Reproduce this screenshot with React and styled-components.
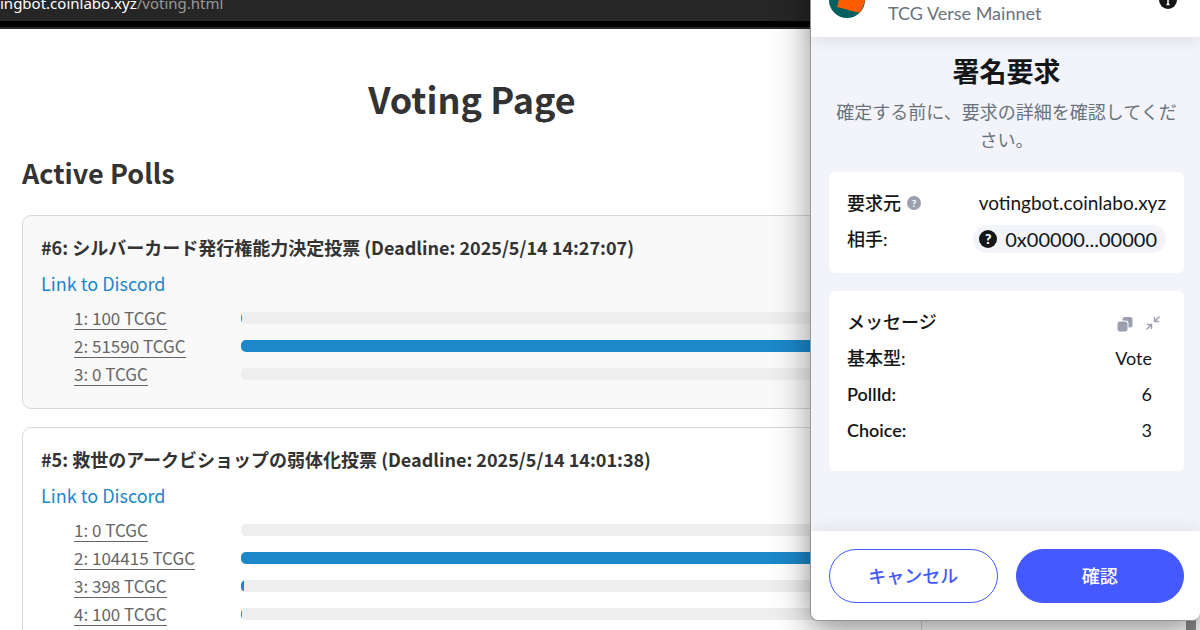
import React from 'react';
import styled, { createGlobalStyle } from 'styled-components';

const GlobalStyle = createGlobalStyle`
  * {
    box-sizing: border-box;
  }

  body {
    margin: 0;
    background: #fff;
    color: #333;
    font-family: 'Noto Sans CJK JP', sans-serif;
    font-size: 18px;
    line-height: 28px;
  }

  h1, h2, h3, p, ul, dl, dd {
    margin: 0;
    padding: 0;
  }

  button {
    font: inherit;
    padding: 0;
    border: none;
    background: none;
    cursor: pointer;
  }
`;

const Screen = styled.div`
  position: relative;
  display: flex;
  flex-direction: column;
  height: 100vh;
  overflow: hidden;
`;

const AddressBar = styled.header`
  flex: none;
  display: flex;
  align-items: flex-end;
  height: 29px;
  padding-bottom: 12px;
  overflow: hidden;
  background: linear-gradient(#262626 21px, #000 21px, #000 27px, #262626 27px);
  color: #fff;
  font-family: 'Noto Sans', sans-serif;
  font-size: 15px;
  white-space: nowrap;
`;

const Path = styled.span`
  color: #999;
`;

const Viewport = styled.div`
  flex: 1;
  display: flex;
  min-height: 0;
  overflow: hidden;
`;

const Main = styled.main`
  flex: 1;
  min-width: 0;
  padding: 40px 22px 0;
`;

const Container = styled.div`
  max-width: 900px;
`;

const PageTitle = styled.h1`
  color: #333;
  font-size: 36px;
  font-weight: 700;
  line-height: 58px;
  text-align: center;
`;

const SectionTitle = styled.h2`
  margin: 26px 0 22px;
  font-size: 27px;
  font-weight: 700;
  line-height: 40px;
`;

const PollCard = styled.section`
  margin-bottom: 18px;
  padding: 17px 18px 20px;
  border: 1px solid #d8d8d8;
  border-radius: 9px;
  background: ${({ $active }) => ($active ? '#f9f9f9' : '#fff')};
`;

const PollTitle = styled.h3`
  margin-bottom: 8px;
  font-size: 18px;
  font-weight: 700;
`;

const DiscordLink = styled.a`
  display: block;
  width: fit-content;
  margin-bottom: 7px;
  color: #1c87c9;
  text-decoration: none;
`;

const OptionList = styled.ul`
  list-style: none;
  padding: 0 18px 0 33px;
`;

const Option = styled.li`
  display: grid;
  grid-template-columns: 167px 1fr;
  align-items: center;
  height: 28px;
`;

const OptionButton = styled.button`
  justify-self: start;
  height: 24px;
  border-bottom: 1px solid #666;
  color: #666;
  font-size: 17px;
  line-height: 24px;
`;

const Track = styled.div`
  height: 12px;
  overflow: hidden;
  border-radius: 5px;
  background: #eee;
`;

const Fill = styled.div`
  height: 100%;
  background: #1c87c9;
`;

const Scrollbar = styled.div`
  flex: none;
  width: 14px;
  padding-right: 4px;
  background: #fcfcfc;
`;

const Thumb = styled.div`
  height: 100%;
  background: #8b8b8b;
`;

const Wallet = styled.aside`
  position: absolute;
  top: -35px;
  right: 0;
  width: 390px;
  border: 1px solid #999;
  border-right: none;
  border-radius: 8px;
  background: #f2f4f9;
  box-shadow: 0 10px 36px rgba(0, 0, 0, 0.42);
  color: #141618;
  font-family: Lato, 'Noto Sans CJK JP', sans-serif;
`;

const WalletHeader = styled.div`
  display: flex;
  align-items: center;
  height: 71px;
  padding: 0 23px 3px 18px;
  background: #fff;
  box-shadow: 0 2px 16px rgba(0, 0, 0, 0.1);
`;

const Network = styled.span`
  flex: 1;
  align-self: flex-end;
  padding: 0 0 7px 23px;
  color: #6a737d;
`;

const WalletBody = styled.div`
  padding: 18px 16px 42px 18px;
`;

const RequestTitle = styled.h2`
  margin-bottom: 9px;
  font-size: 27px;
  font-weight: 700;
  line-height: 34px;
  text-align: center;
`;

const RequestNote = styled.p`
  margin-bottom: 18px;
  color: #6a737d;
  text-align: center;
`;

const Panel = styled.dl`
  margin-bottom: 18px;
  padding: 13px 18px ${({ $bottom }) => $bottom}px;
  border-radius: 6px;
  background: #fff;
`;

const Row = styled.div`
  display: flex;
  align-items: center;
  justify-content: space-between;
  height: 36px;
  padding-right: ${({ $inset }) => ($inset ? 14 : 0)}px;
`;

const Label = styled.dt`
  display: flex;
  align-items: center;
  gap: 6px;
  font-weight: ${({ $latin }) => ($latin ? 600 : 500)};
`;

const Value = styled.dd`
  color: #141618;
  font-size: ${({ $large }) => ($large ? 19 : 18)}px;
`;

const HelpDot = styled.span`
  display: inline-flex;
  align-items: center;
  justify-content: center;
  width: ${({ $size }) => $size}px;
  height: ${({ $size }) => $size}px;
  border-radius: 50%;
  background: ${({ $color }) => $color};
  color: #fff;
  font-size: ${({ $size }) => $size - 4}px;
  font-weight: 900;
  line-height: 1;
`;

const AddressPill = styled.button`
  display: flex;
  align-items: center;
  gap: 8px;
  height: 28px;
  padding: 0 9px 0 6px;
  border-radius: 14px;
  background: #f2f4f9;
  color: #141618;
  font-size: 20px;
`;

const Tools = styled.dd`
  display: flex;
  gap: 12px;
  margin-right: -9px;
  padding-top: 4px;
`;

const ToolButton = styled.button`
  display: flex;
  color: #9b9fae;
`;

const WalletFooter = styled.div`
  display: grid;
  grid-template-columns: 1fr 1fr;
  gap: 18px;
  padding: 18px 16px 17px 18px;
  border-radius: 0 0 8px 8px;
  background: #fff;
  box-shadow: 0 -2px 16px rgba(0, 0, 0, 0.08);
`;

const ActionButton = styled.button`
  height: 54px;
  border: 1px solid #4459ff;
  border-radius: 27px;
  background: ${({ $primary }) => ($primary ? '#4459ff' : '#fff')};
  color: ${({ $primary }) => ($primary ? '#fff' : '#4459ff')};
  font-weight: 500;
`;

const polls = [
  {
    id: 6,
    title: '#6: シルバーカード発行権能力決定投票 (Deadline: 2025/5/14 14:27:07)',
    active: true,
    options: [
      { votes: 100, percent: 0.2 },
      { votes: 51590, percent: 99.8 },
      { votes: 0, percent: 0 },
    ],
  },
  {
    id: 5,
    title: '#5: 救世のアークビショップの弱体化投票 (Deadline: 2025/5/14 14:01:38)',
    active: false,
    options: [
      { votes: 0, percent: 0 },
      { votes: 104415, percent: 99.5 },
      { votes: 398, percent: 0.4 },
      { votes: 100, percent: 0.1 },
    ],
  },
];

const Avatar = () => (
  <svg width="36" height="36" viewBox="0 0 36 36" aria-hidden="true">
    <clipPath id="avatar">
      <circle cx="18" cy="18" r="18" />
    </clipPath>
    <g clipPath="url(#avatar)">
      <rect width="36" height="36" fill="#015f5f" />
      <path d="M15 -4 L8 25 L31 31 L42 6 Z" fill="#fc5c00" />
    </g>
  </svg>
);

const InfoIcon = () => (
  <svg width="18" height="18" viewBox="0 0 18 18" aria-hidden="true">
    <circle cx="9" cy="9" r="9" fill="#141618" />
    <circle cx="9" cy="5" r="1" fill="#fff" />
    <path d="M7.5 8 H9 V13.5 M7.5 13.5 H10.5" fill="none" stroke="#fff" strokeWidth="1.5" />
  </svg>
);

const CopyIcon = () => (
  <svg width="16" height="16" viewBox="0 0 16 16" aria-hidden="true">
    <rect x="5.5" y="1" width="10" height="10.5" rx="2.5" fill="currentColor" />
    <rect x="0" y="4.5" width="11.5" height="11.5" rx="3" fill="#fff" />
    <rect x="0.5" y="5.5" width="10" height="10" rx="2.5" fill="currentColor" />
  </svg>
);

const CollapseIcon = () => (
  <svg width="16" height="16" viewBox="0 0 16 16" fill="none" stroke="currentColor" strokeWidth="1.4" aria-hidden="true">
    <path d="M14.5 0.5 L9.5 5.5 M9.5 1 V5.5 H14" />
    <path d="M1.5 13.5 L6.5 8.5 M2 8.5 H6.5 V13" />
  </svg>
);

const Poll = ({ poll }) => (
  <PollCard $active={poll.active}>
    <PollTitle>{poll.title}</PollTitle>
    <DiscordLink href="#discord">Link to Discord</DiscordLink>
    <OptionList>
      {poll.options.map((option, index) => (
        <Option key={index}>
          <OptionButton type="button">
            {`${index + 1}: ${option.votes} TCGC`}
          </OptionButton>
          <Track>
            <Fill style={{ width: `${option.percent}%` }} />
          </Track>
        </Option>
      ))}
    </OptionList>
  </PollCard>
);

const SignatureRequest = () => (
  <Wallet>
    <WalletHeader>
      <Avatar />
      <Network>TCG Verse Mainnet</Network>
      <ToolButton type="button" aria-label="info">
        <InfoIcon />
      </ToolButton>
    </WalletHeader>
    <WalletBody>
      <RequestTitle>署名要求</RequestTitle>
      <RequestNote>確定する前に、要求の詳細を確認してください。</RequestNote>
      <Panel $bottom={16}>
        <Row>
          <Label>
            要求元 <HelpDot $size={14} $color="#9b9fae">?</HelpDot>
          </Label>
          <Value $large>votingbot.coinlabo.xyz</Value>
        </Row>
        <Row>
          <Label>相手:</Label>
          <Value>
            <AddressPill type="button">
              <HelpDot $size={18} $color="#141618">?</HelpDot>
              0x00000...00000
            </AddressPill>
          </Value>
        </Row>
      </Panel>
      <Panel $bottom={23}>
        <Row $inset>
          <Label>メッセージ</Label>
          <Tools>
            <ToolButton type="button" aria-label="copy">
              <CopyIcon />
            </ToolButton>
            <ToolButton type="button" aria-label="collapse">
              <CollapseIcon />
            </ToolButton>
          </Tools>
        </Row>
        <Row $inset>
          <Label>基本型:</Label>
          <Value>Vote</Value>
        </Row>
        <Row $inset>
          <Label $latin>PollId:</Label>
          <Value>6</Value>
        </Row>
        <Row $inset>
          <Label $latin>Choice:</Label>
          <Value>3</Value>
        </Row>
      </Panel>
    </WalletBody>
    <WalletFooter>
      <ActionButton type="button">キャンセル</ActionButton>
      <ActionButton type="button" $primary>確認</ActionButton>
    </WalletFooter>
  </Wallet>
);

const App = () => {
  return (
    <Screen>
      <GlobalStyle />
      <AddressBar>
        ingbot.coinlabo.xyz<Path>/voting.html</Path>
      </AddressBar>
      <Viewport>
        <Main>
          <Container>
            <PageTitle>Voting Page</PageTitle>
            <SectionTitle>Active Polls</SectionTitle>
            {polls.map((poll) => (
              <Poll key={poll.id} poll={poll} />
            ))}
          </Container>
        </Main>
        <Scrollbar>
          <Thumb />
        </Scrollbar>
      </Viewport>
      <SignatureRequest />
    </Screen>
  );
};

export default App;
